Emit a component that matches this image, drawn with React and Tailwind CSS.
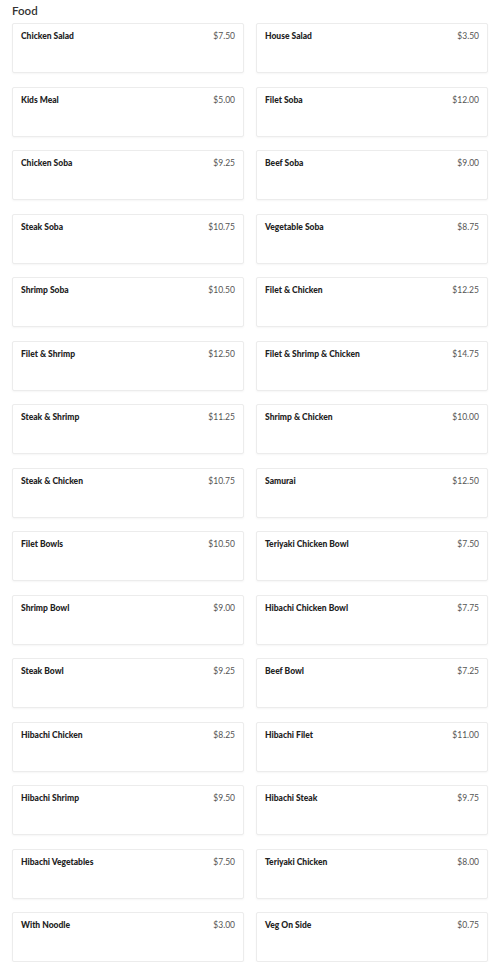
import React from 'react';

const items = [
  ['Chicken Salad', '$7.50'], ['House Salad', '$3.50'],
  ['Kids Meal', '$5.00'], ['Filet Soba', '$12.00'],
  ['Chicken Soba', '$9.25'], ['Beef Soba', '$9.00'],
  ['Steak Soba', '$10.75'], ['Vegetable Soba', '$8.75'],
  ['Shrimp Soba', '$10.50'], ['Filet & Chicken', '$12.25'],
  ['Filet & Shrimp', '$12.50'], ['Filet & Shrimp & Chicken', '$14.75'],
  ['Steak & Shrimp', '$11.25'], ['Shrimp & Chicken', '$10.00'],
  ['Steak & Chicken', '$10.75'], ['Samurai', '$12.50'],
  ['Filet Bowls', '$10.50'], ['Teriyaki Chicken Bowl', '$7.50'],
  ['Shrimp Bowl', '$9.00'], ['Hibachi Chicken Bowl', '$7.75'],
  ['Steak Bowl', '$9.25'], ['Beef Bowl', '$7.25'],
  ['Hibachi Chicken', '$8.25'], ['Hibachi Filet', '$11.00'],
  ['Hibachi Shrimp', '$9.50'], ['Hibachi Steak', '$9.75'],
  ['Hibachi Vegetables', '$7.50'], ['Teriyaki Chicken', '$8.00'],
  ['With Noodle', '$3.00'], ['Veg On Side', '$0.75'],
];

export default function App() {
  return (
    <div className="bg-white px-3 pt-[4px]" style={{ fontFamily: 'Lato, "Open Sans", sans-serif' }}>
      {/* Section title */}
      <h2 className="text-[11.5px] font-semibold text-[#333] leading-[14px] mb-[5px]">Food</h2>

      <div className="grid grid-cols-2 gap-x-[12px] gap-y-[13.5px]">
        {items.map(([name, price]) => (
          <div
            key={name}
            className="h-[50px] rounded-[2px] border border-[#ececec] bg-white shadow-[0_1px_2px_rgba(0,0,0,0.04)] px-[8px] pt-[7px]"
          >
            <div className="flex items-start justify-between leading-[11px]">
              <span className="text-[8.5px] font-black text-[#222]">{name}</span>
              <span className="text-[8.5px] text-[#555]">{price}</span>
            </div>
          </div>
        ))}
      </div>
    </div>
  );
}
